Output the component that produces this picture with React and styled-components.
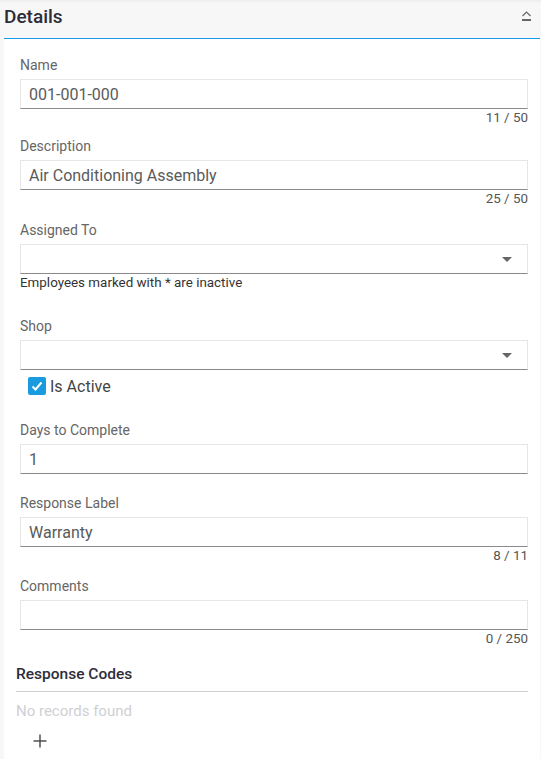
import React from 'react';
import styled, { createGlobalStyle } from 'styled-components';

const GlobalStyle = createGlobalStyle`
  body {
    margin: 0;
    background: #f7f7f7;
    font-family: Roboto, "Liberation Sans", sans-serif;
  }
`;

const Page = styled.div`
  width: 541px;
  min-height: 759px;
  background: #f7f7f7;
  box-shadow: inset 0 3px 3px -2px rgba(0, 0, 0, 0.06);
`;

const Header = styled.div`
  display: flex;
  justify-content: space-between;
  align-items: center;
  height: 38px;
  padding: 0 9px 0 4px;
  box-sizing: border-box;
`;

const Title = styled.h2`
  margin: 0;
  font-size: 19px;
  font-weight: 500;
  color: #2d2d3a;
  line-height: 24px;
  margin-top: -5px;
`;

const CollapseButton = styled.button`
  border: none;
  background: none;
  padding: 0;
  display: flex;
  margin-top: -6px;
  cursor: pointer;
`;

const Panel = styled.div`
  margin: 0 1px 0 4px;
  border-top: 1px solid #1a9bea;
  background: #fff;
  padding: 16px 12px 20px 12px;
  min-height: 720px;
  box-sizing: border-box;
`;

const Form = styled.div`
  padding-left: 4px;
`;

const Field = styled.div`
  margin-bottom: ${(p) => p.$mb || 0}px;
`;

const Label = styled.label`
  display: block;
  font-size: 14px;
  line-height: 20px;
  color: #666;
  margin-bottom: 4px;
`;

const InputBox = styled.div`
  height: 30px;
  box-sizing: border-box;
  border: 1px solid #e6e6e6;
  border-bottom-color: #8a8a8a;
  display: flex;
  align-items: center;
  padding: 0 8px;
  font-size: 16px;
  color: #5a5a5a;
`;

const Arrow = styled.span`
  margin-left: auto;
  margin-right: 7px;
  width: 0;
  height: 0;
  border-left: 5px solid transparent;
  border-right: 5px solid transparent;
  border-top: 5px solid #666;
`;

const Counter = styled.div`
  text-align: right;
  font-size: 13.4px;
  line-height: 18px;
  color: #555;
`;

const Helper = styled.div`
  font-size: 13.4px;
  line-height: 18px;
  color: #333;
`;

const CheckRow = styled.div`
  display: flex;
  align-items: center;
  height: 24px;
  margin-top: 4px;
  padding-left: 8px;
  gap: 4px;
  font-size: 16px;
  color: #444;
`;

const CheckBox = styled.span`
  width: 18px;
  height: 18px;
  border-radius: 2px;
  background: #1a9be0;
  display: flex;
  align-items: center;
  justify-content: center;
`;

const SectionTitle = styled.div`
  font-size: 15.5px;
  font-weight: 500;
  line-height: 22px;
  color: #2d2d3a;
  padding-bottom: 6px;
  border-bottom: 1px solid #cfcfcf;
  margin-top: 15px;
`;

const Empty = styled.div`
  font-size: 15px;
  line-height: 20px;
  color: #cfcfd4;
  margin-top: 9px;
`;

const AddButton = styled.button`
  border: none;
  background: none;
  padding: 0;
  margin: 13px 0 0 17px;
  display: flex;
  cursor: pointer;
`;

const TextField = ({ label, value, counter, mb }) => (
  <Field $mb={mb}>
    <Label>{label}</Label>
    <InputBox>{value}</InputBox>
    {counter && <Counter>{counter}</Counter>}
  </Field>
);

export default function App() {
  return (
    <Page>
      <GlobalStyle />
      <Header>
        <Title>Details</Title>
        <CollapseButton>
          <svg width="11" height="12" viewBox="0 0 11 12">
            <polyline points="1.5,6 5.5,2 9.5,6" fill="none" stroke="#666" strokeWidth="1.2" />
            <line x1="1" y1="10" x2="10" y2="10" stroke="#666" strokeWidth="2" />
          </svg>
        </CollapseButton>
      </Header>
      <Panel>
        <Form>
          <TextField label="Name" value="001-001-000" counter="11 / 50" mb={9} />
          <TextField label="Description" value="Air Conditioning Assembly" counter="25 / 50" mb={12} />
          <Field $mb={24}>
            <Label>Assigned To</Label>
            <InputBox>
              <Arrow />
            </InputBox>
            <Helper>Employees marked with * are inactive</Helper>
          </Field>
          <Field $mb={22}>
            <Label>Shop</Label>
            <InputBox>
              <Arrow />
            </InputBox>
            <CheckRow>
              <CheckBox>
                <svg width="14" height="14" viewBox="0 0 14 14">
                  <polyline points="2.5,7.5 5.5,10.5 11.5,3.5" fill="none" stroke="#fff" strokeWidth="2" />
                </svg>
              </CheckBox>
              Is Active
            </CheckRow>
          </Field>
          <TextField label="Days to Complete" value="1" mb={19} />
          <TextField label="Response Label" value="Warranty" counter="8 / 11" mb={11} />
          <TextField label="Comments" value="" counter="0 / 250" />
        </Form>
        <SectionTitle>Response Codes</SectionTitle>
        <Empty>No records found</Empty>
        <AddButton>
          <svg width="14" height="14" viewBox="0 0 14 14">
            <line x1="7" y1="0.5" x2="7" y2="13.5" stroke="#444" strokeWidth="1.4" />
            <line x1="0.5" y1="7" x2="13.5" y2="7" stroke="#444" strokeWidth="1.4" />
          </svg>
        </AddButton>
      </Panel>
    </Page>
  );
}
